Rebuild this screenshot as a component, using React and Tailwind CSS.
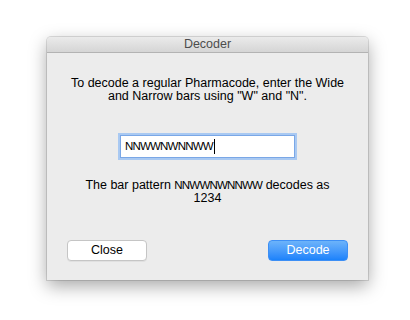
export default function App() {
  return (
    <div className="w-[410px] h-[320px] bg-white pt-[37px] pl-[47px]" style={{ fontFamily: '"Liberation Sans", Arial, sans-serif' }}>
      <div className="w-[321px] h-[243px] bg-[#ececec] rounded-t-[4px] shadow-[0_6px_18px_rgba(0,0,0,0.35),0_0_0_1px_rgba(0,0,0,0.12)] flex flex-col">
        <div className="h-[16px] bg-gradient-to-b from-[#ebebeb] to-[#d5d5d5] border-b border-[#b3b3b3] rounded-t-[4px] flex items-center justify-center text-[12.5px] leading-none text-[#4d4d4d]">
          Decoder
        </div>
        <div className="flex flex-col items-center text-[12.5px] leading-[13px] text-black">
          <div className="mt-[24px] text-center">
            <div>To decode a regular Pharmacode, enter the Wide</div>
            <div>and Narrow bars using "W" and "N".</div>
          </div>
          <div className="mt-[32px] w-[175px] h-[23px] bg-white border border-[#7aa7e6] shadow-[0_0_0_2px_#a9c9f2] flex items-center pl-[4px] text-[12.5px]">
            <span className="text-[11.5px] tracking-[-0.8px]">NNWWNWNNWW</span>
            <span className="w-px h-[15px] bg-black ml-[1px]"></span>
          </div>
          <div className="mt-[21px] text-center">
            <div>The bar pattern <span className="text-[11.5px] tracking-[-0.8px]">NNWWNWNNWW</span> decodes as</div>
            <div>1234</div>
          </div>
          <div className="mt-[35px] w-full flex justify-between px-[20px]">
            <button className="w-[80px] h-[21px] bg-white border border-[#c5c5c5] rounded-[4px] text-[12.5px] leading-none text-black shadow-[0_1px_0_rgba(0,0,0,0.05)]">Close</button>
            <button className="w-[80px] h-[21px] bg-gradient-to-b from-[#6cb3fa] to-[#1a82fb] border border-[#3d8ff5] rounded-[4px] text-[12.5px] leading-none text-white">Decode</button>
          </div>
        </div>
      </div>
    </div>
  );
}
